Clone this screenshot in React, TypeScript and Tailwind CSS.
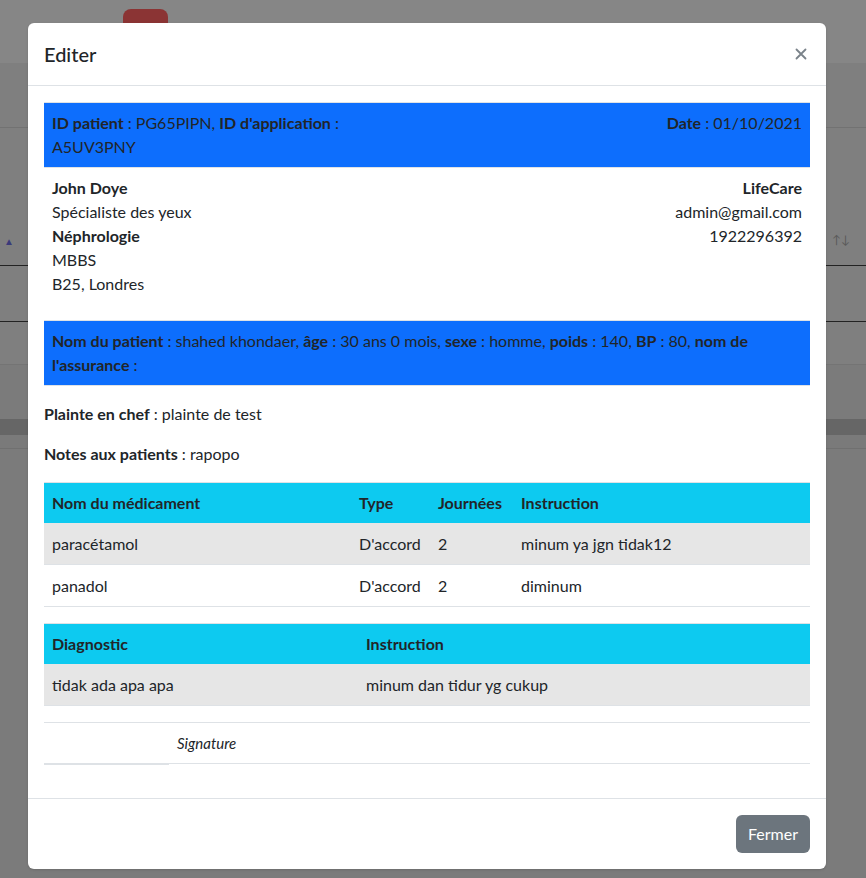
import React from "react";

const font = { fontFamily: "Lato, 'Noto Sans', sans-serif" };

const meds = [
  { name: "paracétamol", type: "D'accord", days: "2", instr: "minum ya jgn tidak12" },
  { name: "panadol", type: "D'accord", days: "2", instr: "diminum" },
];

function CloseIcon() {
  return (
    <svg width="12" height="12" viewBox="0 0 16 16" fill="none" stroke="#6c757d" strokeWidth="2.4" strokeLinecap="round">
      <path d="M2 2l12 12M14 2L2 14" />
    </svg>
  );
}

// faded page behind the dialog
function Backdrop() {
  return (
    <div className="min-h-[878px] bg-[#7b7b7b] flex flex-col">
      <div className="h-[63px] bg-[#868686] flex">
        <div className="ml-[123px] mt-[9px] w-[45px] h-[30px] rounded-lg bg-[#8b3434]"></div>
      </div>
      <div className="h-[65px] bg-[#7f7f7f] border-b border-[#727272]"></div>
      <div className="h-[138px] bg-[#7f7f7f] flex items-end justify-between px-1 pb-4 border-b border-[#222]">
        <span className="text-[10px] text-[#3a3a7a]">▲</span>
        <span className="text-[12px] text-[#5a5a5a] mr-3">↑↓</span>
      </div>
      <div className="h-[56px] bg-[#7f7f7f] border-b border-[#222]"></div>
      <div className="h-[43px] bg-[#7f7f7f] border-b border-[#747474]"></div>
      <div className="h-[54px] bg-[#7b7b7b]"></div>
      <div className="h-[16px] bg-[#666666]"></div>
      <div className="h-[14px] bg-[#7a7a7a] border-b border-[#707070]"></div>
    </div>
  );
}

export default function App() {
  return (
    <div className="relative w-[866px] h-[878px] overflow-hidden text-[#212529]" style={font}>
      <Backdrop />
      <div className="absolute inset-0 flex">
        <div className="ml-[28px] mt-[23px] w-[798px] h-[846px] bg-white rounded-md flex flex-col shadow-sm">
          <div className="flex items-center justify-between px-4 py-4 border-b border-[#dee2e6]">
            <h5 className="text-[20px] leading-[30px] font-medium">Editer</h5>
            <button className="-mr-[1px] p-1 opacity-90">
              <CloseIcon />
            </button>
          </div>

          <div className="p-4 text-[16px] leading-6">
            <div className="flex bg-[#0d6efd] border-y border-[#dee2e6]">
              <div className="w-1/2 px-2 py-2">
                <b>ID patient</b> : PG65PIPN, <b>ID d'application</b> : A5UV3PNY
              </div>
              <div className="w-1/2 px-2 py-2 text-right">
                <b>Date</b> : 01/10/2021
              </div>
            </div>

            <div className="flex justify-between px-2 pt-[8px] pb-[24px]">
              <div>
                <div className="font-bold">John Doye</div>
                <div>Spécialiste des yeux</div>
                <div className="font-bold">Néphrologie</div>
                <div>MBBS</div>
                <div>B25, Londres</div>
              </div>
              <div className="text-right">
                <div className="font-bold">LifeCare</div>
                <div>admin@gmail.com</div>
                <div>1922296392</div>
              </div>
            </div>

            <div className="bg-[#0d6efd] border-y border-[#dee2e6] px-2 py-2">
              <b>Nom du patient</b> : shahed khondaer, <b>âge</b> : 30 ans 0 mois, <b>sexe</b> : homme,{" "}
              <b>poids</b> : 140, <b>BP</b> : 80, <b>nom de l'assurance</b> :
            </div>

            <p className="mt-4">
              <b>Plainte en chef</b> : plainte de test
            </p>
            <p className="mt-4">
              <b>Notes aux patients</b> : rapopo
            </p>

            <table className="mt-4 w-full table-fixed border-collapse text-left">
              <thead>
                <tr className="bg-[#0dcaf0] border-t border-[#dee2e6]">
                  <th className="w-[307px] px-2 py-2 font-bold">Nom du médicament</th>
                  <th className="w-[79px] px-2 py-2 font-bold">Type</th>
                  <th className="w-[83px] px-2 py-2 font-bold">Journées</th>
                  <th className="px-2 py-2 font-bold">Instruction</th>
                </tr>
              </thead>
              <tbody>
                {meds.map((m, i) => (
                  <tr key={m.name} className={`border-b border-[#dee2e6] ${i % 2 === 0 ? "bg-[#e6e6e6]" : "bg-white"}`}>
                    <td className="px-2 pt-[9px] pb-2">{m.name}</td>
                    <td className="px-2 pt-[9px] pb-2">{m.type}</td>
                    <td className="px-2 pt-[9px] pb-2">{m.days}</td>
                    <td className="px-2 pt-[9px] pb-2">{m.instr}</td>
                  </tr>
                ))}
              </tbody>
            </table>

            <table className="mt-4 w-full table-fixed border-collapse text-left">
              <thead>
                <tr className="bg-[#0dcaf0] border-t border-[#dee2e6]">
                  <th className="w-[314px] px-2 py-2 font-bold">Diagnostic</th>
                  <th className="px-2 py-2 font-bold">Instruction</th>
                </tr>
              </thead>
              <tbody>
                <tr className="bg-[#e6e6e6] border-b border-[#dee2e6]">
                  <td className="px-2 pt-[9px] pb-2">tidak ada apa apa</td>
                  <td className="px-2 pt-[9px] pb-2">minum dan tidur yg cukup</td>
                </tr>
              </tbody>
            </table>

            <table className="mt-4 w-full table-fixed border-collapse text-left">
              <tbody>
                <tr className="border-y border-[#dee2e6]">
                  <td className="w-[125px] px-2 py-2 border-b-2 border-[#dee2e6]"></td>
                  <td className="px-2 py-2 italic text-[15px]">Signature</td>
                </tr>
              </tbody>
            </table>
          </div>

          <div className="mt-auto flex justify-end px-4 py-4 border-t border-[#dee2e6]">
            <button className="bg-[#6c757d] text-white text-[16px] leading-6 px-3 py-[7px] rounded-md">Fermer</button>
          </div>
        </div>
      </div>
    </div>
  );
}
